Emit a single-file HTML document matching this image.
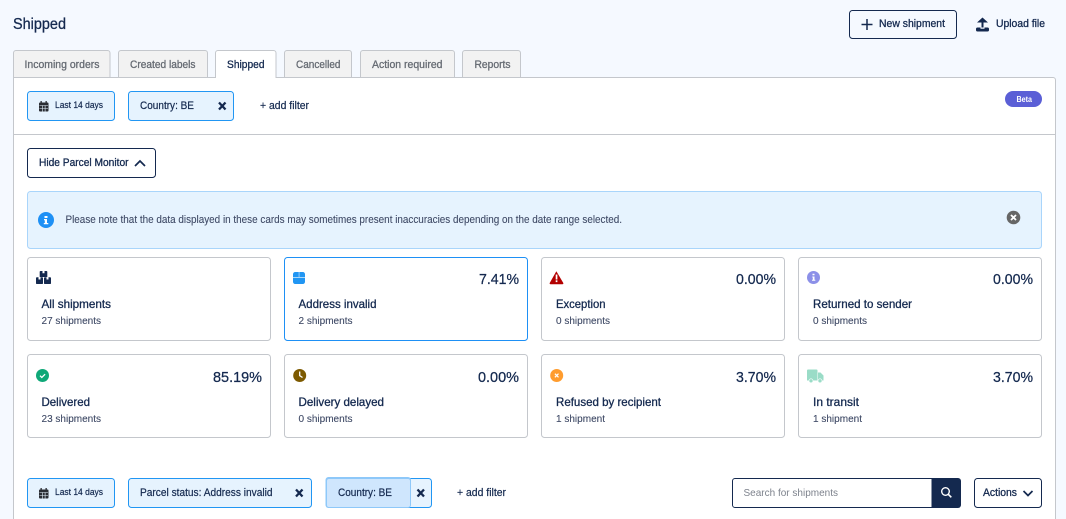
<!DOCTYPE html>
<html><head><meta charset="utf-8"><style>
html,body{margin:0;padding:0;width:1066px;height:519px;overflow:hidden;background:#f5f9ff}
svg{display:block}
text{font-family:"Liberation Sans",sans-serif;fill:#14294f;font-size:11px;stroke:#14294f;stroke-width:.2}
.tab{fill:#666b73;stroke:#666b73;stroke-width:.3}
.t{font-size:12px;stroke-width:.3}
.s{font-size:10.5px;fill:#3f4a66;stroke:#3f4a66;stroke-width:.12}
.p{font-size:15px;stroke-width:.25}
.m{stroke-width:.3}
</style></head><body>
<svg width="1066" height="519" viewBox="0 0 1066 519" xmlns="http://www.w3.org/2000/svg">
<rect width="1066" height="519" fill="#f5f9ff"/>
<text x="13" y="29" style="font-size:16px;stroke-width:.3" textLength="53" lengthAdjust="spacingAndGlyphs">Shipped</text>

<!-- tabs -->
<g fill="#f2f2f2" stroke="#c4c7cc">
<path d="M13.500 78V53a2.500 2.500 0 0 1 2.500-2.500h91.500a2.500 2.500 0 0 1 2.500 2.500V78Z"/>
<path d="M118.500 78V53a2.500 2.500 0 0 1 2.500-2.500h84a2.500 2.500 0 0 1 2.500 2.500V78"/>
<path d="M284.500 78V53a2.500 2.500 0 0 1 2.500-2.500h62a2.500 2.500 0 0 1 2.500 2.500V78"/>
<path d="M360.500 78V53a2.500 2.500 0 0 1 2.500-2.500h89a2.500 2.500 0 0 1 2.500 2.500V78"/>
<path d="M462.500 78V53a2.500 2.500 0 0 1 2.500-2.500h53a2.500 2.500 0 0 1 2.500 2.500V78"/>
</g>

<!-- panel -->
<path d="M13.500 519V77.500H1053a2.500 2.500 0 0 1 2.500 2.500V519" fill="#fff" stroke="#c4c7cc"/>
<path d="M215.500 78V53a2.500 2.500 0 0 1 2.500-2.500h55.500a2.500 2.500 0 0 1 2.500 2.500V78" fill="#fff" stroke="#c4c7cc"/>
<rect x="216" y="76" width="59.500" height="3" fill="#fff"/>

<text x="24.500" y="68" class="tab" textLength="75" lengthAdjust="spacingAndGlyphs">Incoming orders</text>
<text x="130" y="68" class="tab" textLength="65.500" lengthAdjust="spacingAndGlyphs">Created labels</text>
<text x="227" y="68" class="m" textLength="37.500" lengthAdjust="spacingAndGlyphs">Shipped</text>
<text x="296" y="68" class="tab" textLength="44.500" lengthAdjust="spacingAndGlyphs">Cancelled</text>
<text x="372" y="68" class="tab" textLength="70.500" lengthAdjust="spacingAndGlyphs">Action required</text>
<text x="474.500" y="68" class="tab" textLength="36" lengthAdjust="spacingAndGlyphs">Reports</text>

<!-- top right -->
<rect x="849.500" y="10.500" width="107" height="28" rx="3" fill="none" stroke="#14294f"/>
<path d="M867 19v11M861.500 24.500h11" stroke="#14294f" stroke-width="1.500" fill="none"/>
<text x="879" y="27" class="m" textLength="66" lengthAdjust="spacingAndGlyphs">New shipment</text>
<path d="M982.500 17.500l-5.500 5h4.500v5h2v-5h4.500Z" fill="#14294f"/>
<path d="M976 29a1.500 1.500 0 0 1 1.500-1.500h3v1.200h4v-1.200h3a1.500 1.500 0 0 1 1.500 1.500v1a1.500 1.500 0 0 1-1.500 1.500h-10a1.500 1.500 0 0 1-1.500-1.500Z" fill="#14294f"/>
<text x="996" y="27" class="m" textLength="49" lengthAdjust="spacingAndGlyphs">Upload file</text>

<!-- filter row 1 -->
<rect x="27.500" y="91.500" width="87" height="29" rx="3" fill="#e6f3fe" stroke="#2196f3"/>
<g fill="#2a2d33"><rect x="39" y="102.500" width="9.500" height="9" rx="1"/><rect x="40.500" y="101" width="1.300" height="2.500"/><rect x="45.500" y="101" width="1.300" height="2.500"/></g>
<path d="M39.500 105.500h8.500M42.300 105.500v6M45.100 105.500v6M39.500 108.500h8.500" stroke="#e6f3fe" stroke-width=".6"/>
<text x="55" y="108" style="font-size:9.500px" textLength="48" lengthAdjust="spacingAndGlyphs">Last 14 days</text>
<rect x="128.500" y="91.500" width="105" height="29" rx="3" fill="#e6f3fe" stroke="#2196f3"/>
<text x="140" y="109" textLength="54" lengthAdjust="spacingAndGlyphs">Country: BE</text>
<path d="M219 102.500l6.500 7M225.500 102.500l-6.500 7" stroke="#14294f" stroke-width="2.300"/>
<text x="260" y="109" textLength="49" lengthAdjust="spacingAndGlyphs">+ add filter</text>
<rect x="1005" y="91" width="37" height="16" rx="8" fill="#5b5fd6"/>
<text x="1016.500" y="102" style="font-size:8px;fill:#fff;stroke:none;font-weight:700" textLength="15.500" lengthAdjust="spacingAndGlyphs">Beta</text>
<rect x="14" y="134" width="1041" height="1" fill="#c4c7cc"/>

<!-- hide -->
<rect x="27.500" y="148.500" width="128" height="29" rx="3" fill="#fff" stroke="#14294f"/>
<text x="39" y="166" class="m" textLength="89.500" lengthAdjust="spacingAndGlyphs">Hide Parcel Monitor</text>
<path d="M135 166l5-5 5 5" fill="none" stroke="#14294f" stroke-width="1.700"/>

<!-- alert -->
<rect x="27.500" y="191.500" width="1014" height="57" rx="3" fill="#e6f3fe" stroke="#a9d5fb"/>
<circle cx="46" cy="220" r="8" fill="#1e90f5"/>
<path d="M44.500 216h3v2h-3zM44 219h3v4h1.300v1.300h-4.500V223h1v-2.700H44Z" fill="#fff"/>
<text x="65.500" y="223" style="fill:#3f4a66;stroke:#3f4a66;stroke-width:.1" textLength="556.500" lengthAdjust="spacingAndGlyphs">Please note that the data displayed in these cards may sometimes present inaccuracies depending on the date range selected.</text>
<circle cx="1013.500" cy="217.500" r="6.800" fill="#666"/>
<path d="M1011 215l5 5M1016 215l-5 5" stroke="#fff" stroke-width="1.800"/>

<!-- cards -->
<g fill="#fff" stroke="#c4c7cc">
<rect x="27.500" y="257.500" width="243" height="83" rx="3"/>
<rect x="541.500" y="257.500" width="243" height="83" rx="3"/>
<rect x="798.500" y="257.500" width="243" height="83" rx="3"/>
<rect x="27.500" y="354.500" width="243" height="83" rx="3"/>
<rect x="284.500" y="354.500" width="243" height="83" rx="3"/>
<rect x="541.500" y="354.500" width="243" height="83" rx="3"/>
<rect x="798.500" y="354.500" width="243" height="83" rx="3"/>
</g>
<rect x="284.500" y="257.500" width="243" height="83" rx="3" fill="#fff" stroke="#1e90f5"/>

<!-- card icons -->
<path d="M40.500 271h2v2.200h2V271h2a.8.800 0 0 1 .8.800v5.200h-7.600v-5.200a.8.800 0 0 1 .8-.800Z" fill="#14294f"/>
<path d="M36.800 277.300h1.700v2.200h2v-2.200h1.700a.8.800 0 0 1 .8.800v5.100a.8.800 0 0 1-.800.800h-5.400a.8.800 0 0 1-.800-.800v-5.100a.8.800 0 0 1 .8-.800Z" fill="#14294f"/>
<path d="M44.800 277.300h1.700v2.200h2v-2.200h1.700a.8.800 0 0 1 .8.800v5.100a.8.800 0 0 1-.800.800h-5.400a.8.800 0 0 1-.800-.800v-5.100a.8.800 0 0 1 .8-.800Z" fill="#14294f"/>

<path d="M293 277v-2.800a2.200 2.200 0 0 1 2.200-2.200h3.600v5ZM299.300 272h3.500a2.200 2.200 0 0 1 2.200 2.200v2.800h-5.700ZM293 277.600h12v4.200a2.200 2.200 0 0 1-2.200 2.200h-7.600a2.200 2.200 0 0 1-2.200-2.200Z" fill="#2196f3"/>

<path d="M556.500 271.500l6.800 11.500a.8.800 0 0 1-.700 1.200h-12.200a.8.800 0 0 1-.700-1.200l6.500-11.500a.3.300 0 0 1 .300 0Z" fill="#b30000"/>
<rect x="555.700" y="274.500" width="1.700" height="5" fill="#fff"/><rect x="555.700" y="280.300" width="1.700" height="1.800" fill="#fff"/>

<circle cx="813.500" cy="277.500" r="6.500" fill="#8c90e8"/>
<path d="M812.500 273.800h2v1.500h-2zM812.300 276.500h2.200v3.200h.8v1h-3.300v-1h.8v-2.200h-.5Z" fill="#fff"/>

<circle cx="42.500" cy="375.500" r="6.500" fill="#0fa878"/>
<path d="M40 375.700l1.800 1.800 3.300-3.300" fill="none" stroke="#fff" stroke-width="1.300"/>

<circle cx="299.700" cy="375.500" r="6.500" fill="#7d5a00"/>
<path d="M299.700 371.500v4.200l2.800 1.800" fill="none" stroke="#fff" stroke-width="1.300"/>

<circle cx="556.700" cy="375.500" r="6.500" fill="#ff9c2e"/>
<path d="M554.900 373.700l3.600 3.600M558.500 373.700l-3.600 3.600" stroke="#fff" stroke-width="1.200"/>

<path d="M807 370.500a1 1 0 0 1 1-1h8.500a1 1 0 0 1 1 1v10h-10.500ZM818 372.500h2.500l3 3v5h-5.500Z" fill="#9adcc7"/>
<circle cx="811" cy="380.800" r="2" fill="#9adcc7" stroke="#fff" stroke-width=".6"/><circle cx="820" cy="380.800" r="2" fill="#9adcc7" stroke="#fff" stroke-width=".6"/>

<!-- card text -->
<text x="41.500" y="308" class="t" textLength="69.500" lengthAdjust="spacingAndGlyphs">All shipments</text>
<text x="41.500" y="324" class="s" textLength="59.500" lengthAdjust="spacingAndGlyphs">27 shipments</text>
<text x="298.500" y="308" class="t" textLength="78" lengthAdjust="spacingAndGlyphs">Address invalid</text>
<text x="298.500" y="324" class="s" textLength="54" lengthAdjust="spacingAndGlyphs">2 shipments</text>
<text x="479" y="284" class="p" textLength="40" lengthAdjust="spacingAndGlyphs">7.41%</text>
<text x="556" y="308" class="t" textLength="49.500" lengthAdjust="spacingAndGlyphs">Exception</text>
<text x="556" y="324" class="s" textLength="54" lengthAdjust="spacingAndGlyphs">0 shipments</text>
<text x="736" y="284" class="p" textLength="40" lengthAdjust="spacingAndGlyphs">0.00%</text>
<text x="813" y="308" class="t" textLength="99" lengthAdjust="spacingAndGlyphs">Returned to sender</text>
<text x="813" y="324" class="s" textLength="54" lengthAdjust="spacingAndGlyphs">0 shipments</text>
<text x="993" y="284" class="p" textLength="40" lengthAdjust="spacingAndGlyphs">0.00%</text>

<text x="41.500" y="406" class="t" textLength="48.500" lengthAdjust="spacingAndGlyphs">Delivered</text>
<text x="41.500" y="422" class="s" textLength="59.500" lengthAdjust="spacingAndGlyphs">23 shipments</text>
<text x="213" y="382" class="p" textLength="49" lengthAdjust="spacingAndGlyphs">85.19%</text>
<text x="298.500" y="406" class="t" textLength="85.500" lengthAdjust="spacingAndGlyphs">Delivery delayed</text>
<text x="298.500" y="422" class="s" textLength="54" lengthAdjust="spacingAndGlyphs">0 shipments</text>
<text x="478" y="382" class="p" textLength="41" lengthAdjust="spacingAndGlyphs">0.00%</text>
<text x="556" y="406" class="t" textLength="105" lengthAdjust="spacingAndGlyphs">Refused by recipient</text>
<text x="556" y="422" class="s" textLength="49" lengthAdjust="spacingAndGlyphs">1 shipment</text>
<text x="736" y="382" class="p" textLength="40" lengthAdjust="spacingAndGlyphs">3.70%</text>
<text x="813" y="406" class="t" textLength="46" lengthAdjust="spacingAndGlyphs">In transit</text>
<text x="813" y="422" class="s" textLength="49" lengthAdjust="spacingAndGlyphs">1 shipment</text>
<text x="993" y="382" class="p" textLength="40" lengthAdjust="spacingAndGlyphs">3.70%</text>

<!-- bottom filters -->
<rect x="27.500" y="478.500" width="87" height="29" rx="3" fill="#e6f3fe" stroke="#2196f3"/>
<g fill="#2a2d33"><rect x="39" y="489.500" width="9.500" height="9" rx="1"/><rect x="40.500" y="488" width="1.300" height="2.500"/><rect x="45.500" y="488" width="1.300" height="2.500"/></g>
<path d="M39.500 492.500h8.500M42.300 492.500v6M45.100 492.500v6M39.500 495.500h8.500" stroke="#e6f3fe" stroke-width=".6"/>
<text x="55" y="495" style="font-size:9.500px" textLength="48" lengthAdjust="spacingAndGlyphs">Last 14 days</text>
<rect x="128.500" y="478.500" width="183" height="29" rx="3" fill="#e6f3fe" stroke="#2196f3"/>
<text x="140" y="496" textLength="132.500" lengthAdjust="spacingAndGlyphs">Parcel status: Address invalid</text>
<path d="M296 489.500l6.500 7M302.500 489.500l-6.500 7" stroke="#14294f" stroke-width="2.300"/>
<rect x="326.500" y="478.500" width="105" height="29" rx="3" fill="#e6f3fe" stroke="#2196f3"/>
<rect x="325.500" y="477" width="85.500" height="31" rx="3" fill="#8ec8f9"/>
<rect x="327" y="479" width="83" height="28" rx="2" fill="#cfe6fd"/>
<text x="338" y="496" textLength="54" lengthAdjust="spacingAndGlyphs">Country: BE</text>
<path d="M417.500 489.500l6.500 7M424 489.500l-6.500 7" stroke="#14294f" stroke-width="2.300"/>
<text x="457" y="496" textLength="49" lengthAdjust="spacingAndGlyphs">+ add filter</text>

<!-- search -->
<path d="M932 478.500H735a2.500 2.500 0 0 0-2.500 2.500v24a2.500 2.500 0 0 0 2.500 2.500h197Z" fill="#fff" stroke="#14294f"/>
<text x="743.500" y="496" style="font-size:10.500px;fill:#7d828c;stroke:none" textLength="94.500" lengthAdjust="spacingAndGlyphs">Search for shipments</text>
<path d="M932 478h26a3 3 0 0 1 3 3v24a3 3 0 0 1-3 3h-26Z" fill="#14294f"/>
<circle cx="945.500" cy="491.500" r="3.800" fill="none" stroke="#fff" stroke-width="1.400"/>
<path d="M948.300 494.300l3 3" stroke="#fff" stroke-width="1.600"/>
<rect x="974.500" y="478.500" width="67" height="29" rx="3" fill="#fff" stroke="#14294f"/>
<text x="983" y="496" class="m" textLength="34" lengthAdjust="spacingAndGlyphs">Actions</text>
<path d="M1023.500 491l4.500 4.500 4.500-4.500" fill="none" stroke="#14294f" stroke-width="1.700"/>
</svg>
</body></html>
